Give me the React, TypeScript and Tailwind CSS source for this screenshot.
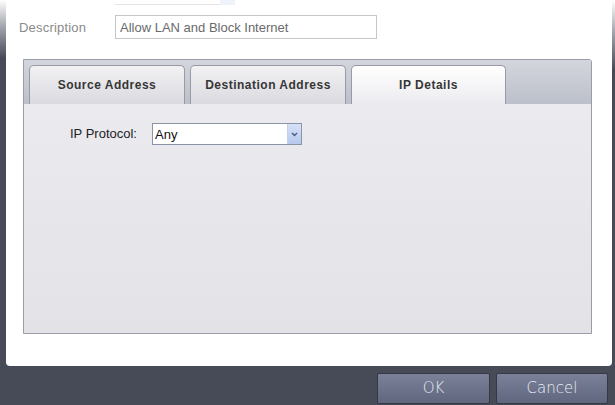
export default function App() {
  return (
    <div className="w-[615px] h-[405px] bg-[#474b57] flex flex-col overflow-hidden font-['Liberation_Sans',Arial,sans-serif]">
      <div className="flex h-[366px]">
        <div className="w-[6px] bg-[linear-gradient(to_bottom,#ffffff_0px,#a8aab2_25px,#474b57_58px)]" />
        <div className="flex-1 bg-white rounded-b-[4px] flex flex-col">
          {/* cut-off field above */}
          <div className="flex h-[5px] pl-[109px]">
            <div className="w-[105px] border-b border-[#e4e4e8]" />
            <div className="w-[15px] bg-[#eef2fb]" />
          </div>
          <div className="flex items-center h-[24px] mt-[10px] pl-[13px]">
            <span className="w-[96px] pt-[2px] text-[13px] tracking-[0.2px] text-[#8a8a8a]">Description</span>
            <div className="w-[262px] h-[24px] border border-[#c6c6c6] flex items-center px-[4px] pt-[1px] text-[13px] text-[#6a6a6a]">
              Allow LAN and Block Internet
            </div>
          </div>
          {/* tab panel */}
          <div className="ml-[17px] mt-[20px] w-[569px] h-[275px] border border-[#9c9ca8] rounded-tr-[3px] flex flex-col">
            <div className="h-[44px] bg-[linear-gradient(to_bottom,#d3d6dc,#bcc0ca)] flex items-end pl-[5px] gap-[5px]">
              <div className="w-[156px] h-[39px] rounded-t-[5px] border border-b-0 border-[#9a9aa6] bg-[linear-gradient(to_bottom,#f2f2f4,#d9d9df)] flex items-center justify-center text-[12px] font-bold tracking-[0.5px] text-[#363636]">
                Source Address
              </div>
              <div className="w-[156px] h-[39px] rounded-t-[5px] border border-b-0 border-[#9a9aa6] bg-[linear-gradient(to_bottom,#f2f2f4,#d9d9df)] flex items-center justify-center text-[12px] font-bold tracking-[0.5px] text-[#363636]">
                Destination Address
              </div>
              <div className="w-[155px] h-[39px] rounded-t-[5px] border border-b-0 border-[#9a9aa6] bg-[linear-gradient(to_bottom,#ffffff,#ececf0)] flex items-center justify-center text-[12px] font-bold tracking-[0.5px] text-[#363636]">
                IP Details
              </div>
            </div>
            <div className="flex-1 bg-[linear-gradient(to_bottom,#eaeaef,#e2e2e7)] pt-[19px]">
              <div className="flex items-center">
                <span className="ml-[46px] w-[82px] text-[13px] text-[#222]">IP Protocol:</span>
                <div className="w-[150px] h-[22px] border border-[#8a96a8] bg-white flex items-center">
                  <span className="flex-1 pl-[2px] pt-[1px] text-[13px] text-[#111]">Any</span>
                  <div className="w-[14px] h-[20px] bg-[linear-gradient(to_bottom,#d6e2f8,#b6c8ee)] border-l border-[#c4d0e8] flex items-center justify-center">
                    <svg width="7" height="5" viewBox="0 0 7 5">
                      <path d="M1 1 L3.5 3.5 L6 1" stroke="#4a5c88" strokeWidth="1.5" fill="none" />
                    </svg>
                  </div>
                </div>
              </div>
            </div>
          </div>
        </div>
        <div className="w-[3px] bg-[linear-gradient(to_bottom,#ffffff_0px,#a8aab2_30px,#474b57_70px)]" />
      </div>
      <div className="flex justify-end gap-[6px] pr-[7px] pt-[7px]">
        <button className="w-[113px] h-[31px] rounded-[2px] border border-[#363944] bg-[linear-gradient(to_bottom,#7a8198,#5f667e)] text-[15px] text-[#e8ecf4] font-['DejaVu_Sans',sans-serif] font-light">
          OK
        </button>
        <button className="w-[112px] h-[31px] rounded-[2px] border border-[#363944] bg-[linear-gradient(to_bottom,#7a8198,#5f667e)] text-[15px] text-[#e8ecf4] font-['DejaVu_Sans',sans-serif] font-light">
          Cancel
        </button>
      </div>
    </div>
  );
}
